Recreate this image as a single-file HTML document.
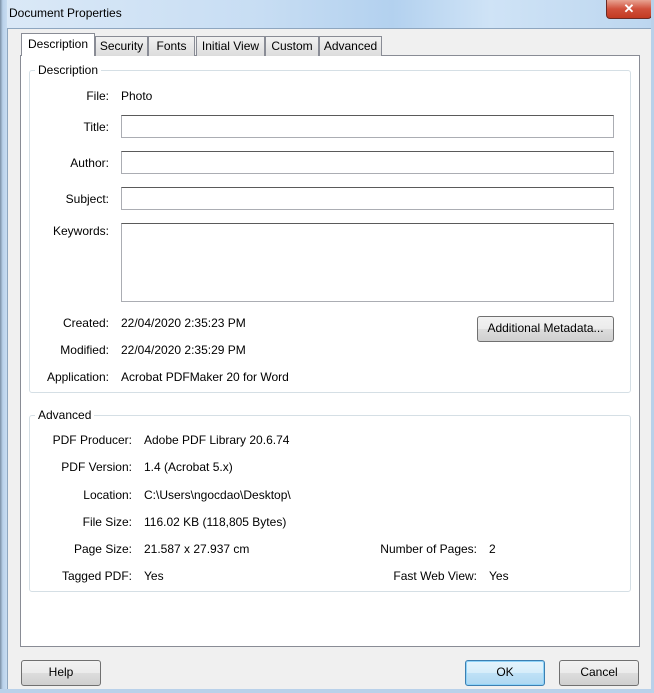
<!DOCTYPE html>
<html><head><style>
*{margin:0;padding:0;box-sizing:border-box}
body{width:654px;height:693px;position:relative;overflow:hidden;font-family:"Liberation Sans",sans-serif;font-size:12px;color:#000;background:#f0f0f0}
.a{position:absolute}
.title{left:0;top:0;width:654px;height:28px;background:linear-gradient(90deg,#dbe9f7 0%,#c7ddf3 40%,#b3d1ef 60%,#cfe3f6 75%,#bcd6ef 100%)}
.lb{left:0;top:0;width:7px;height:693px;background:linear-gradient(90deg,#7a8ea3,#b9d1ea 40%,#c8dcf1)}
.rb{left:651px;top:0;width:3px;height:693px;background:#b9d1ea}
.bb{left:0;top:689px;width:654px;height:4px;background:#b9d1ea}
.content{left:7px;top:28px;width:645px;height:662px;background:#f0f0f0;border-top:1px solid #8ea6bf;border-left:1px solid #8ea6bf}
.close{left:606px;top:0;width:46px;height:19px;border:1px solid #6b2a24;border-top:none;border-radius:0 0 4px 4px;background:linear-gradient(#e8a493,#d0503b 50%,#c23a22);color:#fff;font-weight:bold;text-align:center;font-size:13px;line-height:17px}
.panel{left:20px;top:55px;width:620px;height:592px;background:#fff;border:1px solid #898c95}
.tab{top:36px;height:20px;border:1px solid #898c95;border-bottom:none;background:linear-gradient(#f2f2f2,#dcdcdc);text-align:center;line-height:18px}
.tab.on{top:33px;height:23px;background:#fff;line-height:21px;z-index:2}
.grp{border:1px solid #d5dfe5;border-radius:3px}
.gl{background:#fff;padding:0 3px}
.r{text-align:right}
.in{border:1px solid #abadb3;border-top-color:#5a5a5a;background:#fff;left:121px;width:493px}
.btn{border:1px solid #707070;border-radius:3px;background:linear-gradient(#f2f2f2 0%,#ebebeb 50%,#dddddd 51%,#cfcfcf 100%);text-align:center;line-height:23px}
</style></head><body>
<div class="a title"></div>
<div class="a" style="left:9px;top:6px;font-size:12px">Document Properties</div>
<div class="a close">✕</div>
<div class="a lb"></div>
<div class="a content"></div>
<div class="a rb"></div>
<div class="a bb"></div>

<div class="a panel"></div>
<div class="a tab on" style="left:21px;width:74px">Description</div>
<div class="a tab" style="left:95px;width:53px">Security</div>
<div class="a tab" style="left:148px;width:47px">Fonts</div>
<div class="a tab" style="left:196px;width:69px">Initial View</div>
<div class="a tab" style="left:265px;width:54px">Custom</div>
<div class="a tab" style="left:319px;width:63px">Advanced</div>

<div class="a grp" style="left:29px;top:70px;width:602px;height:323px"></div>
<div class="a gl" style="left:35px;top:63px">Description</div>
<div class="a r" style="left:0;width:109px;top:89px">File:</div>
<div class="a" style="left:121px;top:89px">Photo</div>
<div class="a r" style="left:0;width:109px;top:120px">Title:</div>
<div class="a in" style="top:115px;height:23px"></div>
<div class="a r" style="left:0;width:109px;top:156px">Author:</div>
<div class="a in" style="top:151px;height:23px"></div>
<div class="a r" style="left:0;width:109px;top:192px">Subject:</div>
<div class="a in" style="top:187px;height:23px"></div>
<div class="a r" style="left:0;width:109px;top:224px">Keywords:</div>
<div class="a in" style="top:223px;height:79px"></div>
<div class="a r" style="left:0;width:109px;top:316px">Created:</div>
<div class="a" style="left:121px;top:316px">22/04/2020 2:35:23 PM</div>
<div class="a r" style="left:0;width:109px;top:343px">Modified:</div>
<div class="a" style="left:121px;top:343px">22/04/2020 2:35:29 PM</div>
<div class="a r" style="left:0;width:109px;top:370px">Application:</div>
<div class="a" style="left:121px;top:370px">Acrobat PDFMaker 20 for Word</div>
<div class="a btn" style="left:477px;top:316px;width:137px;height:26px">Additional Metadata...</div>

<div class="a grp" style="left:29px;top:415px;width:602px;height:177px"></div>
<div class="a gl" style="left:35px;top:408px">Advanced</div>
<div class="a r" style="left:0;width:132px;top:433px">PDF Producer:</div>
<div class="a" style="left:144px;top:433px">Adobe PDF Library 20.6.74</div>
<div class="a r" style="left:0;width:132px;top:460px">PDF Version:</div>
<div class="a" style="left:144px;top:460px">1.4 (Acrobat 5.x)</div>
<div class="a r" style="left:0;width:132px;top:488px">Location:</div>
<div class="a" style="left:144px;top:488px">C:\Users\ngocdao\Desktop\</div>
<div class="a r" style="left:0;width:132px;top:515px">File Size:</div>
<div class="a" style="left:144px;top:515px">116.02 KB (118,805 Bytes)</div>
<div class="a r" style="left:0;width:132px;top:542px">Page Size:</div>
<div class="a" style="left:144px;top:542px">21.587 x 27.937 cm</div>
<div class="a r" style="left:0;width:132px;top:569px">Tagged PDF:</div>
<div class="a" style="left:144px;top:569px">Yes</div>
<div class="a r" style="left:300px;width:177px;top:542px">Number of Pages:</div>
<div class="a" style="left:489px;top:542px">2</div>
<div class="a r" style="left:300px;width:177px;top:569px">Fast Web View:</div>
<div class="a" style="left:489px;top:569px">Yes</div>

<div class="a btn" style="left:21px;top:660px;width:80px;height:26px">Help</div>
<div class="a btn" style="left:465px;top:660px;width:80px;height:26px;border-color:#3c7fb1;background:linear-gradient(#e5f4fc 0%,#d6edfa 50%,#bfe1f6 51%,#aed8f2 100%);box-shadow:inset 0 0 0 1px #8fd3f8">OK</div>
<div class="a btn" style="left:559px;top:660px;width:80px;height:26px">Cancel</div>
</body></html>
